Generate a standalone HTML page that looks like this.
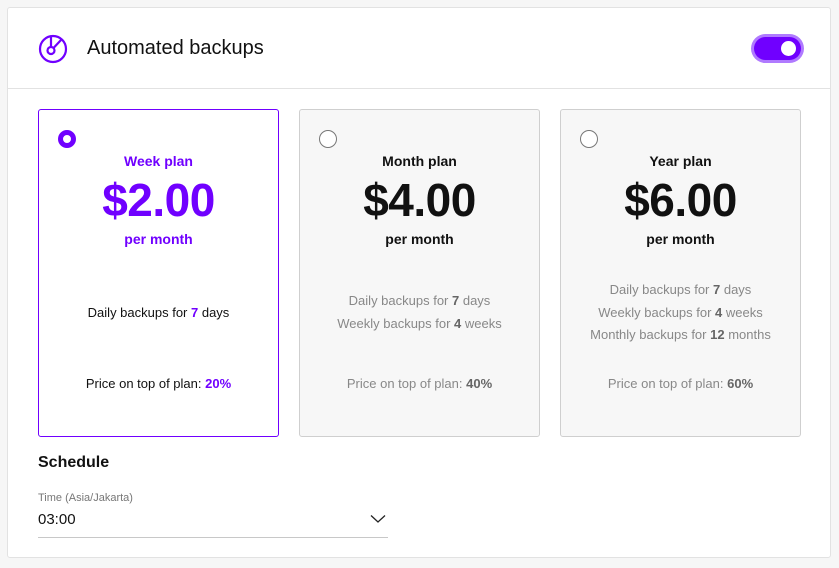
<!DOCTYPE html>
<html><head><style>
*{margin:0;padding:0;box-sizing:border-box}
body{width:839px;height:568px;background:#f6f6f6;font-family:"Liberation Sans",sans-serif;position:relative;overflow:hidden;color:#111}
.main{position:absolute;left:7px;top:7px;width:824px;height:551px;background:#fff;border:1px solid #e2e2e2;border-radius:3px}
.hdr{position:absolute;left:0;top:0;width:100%;height:81px;border-bottom:1px solid #e2e2e2}
.title{position:absolute;left:79px;top:29px;font-size:20px;color:#111}
.tog{position:absolute;left:746px;top:29px;width:47px;height:23px;border-radius:12px;background:#7000ff;box-shadow:0 0 0 3px #b07aff}
.tog i{position:absolute;right:5px;top:4px;width:15px;height:15px;border-radius:50%;background:#fff}
.card{position:absolute;top:109px;width:241px;height:328px;border:1px solid #cfcfcf;border-radius:3px;background:#f7f7f7;text-align:center;color:#888}
.card.sel{border-color:#7000ff;background:#fff;color:#111}
.rad{position:absolute;left:19px;top:20px;width:18px;height:18px;border-radius:50%;border:1.5px solid #777;background:#fff}
.sel .rad{border:5px solid #7000ff}
.pn{position:absolute;top:43px;width:100%;font-size:14px;font-weight:bold;color:#111}
.pr{position:absolute;top:63px;width:100%;font-size:46px;font-weight:bold;color:#111;letter-spacing:-0.5px}
.pm{position:absolute;top:121px;width:100%;font-size:14px;font-weight:bold;color:#111}
.sel .pn,.sel .pr,.sel .pm{color:#7000ff}
.ft{position:absolute;width:100%;font-size:13px;line-height:22.5px}
.ft b{color:#666}
</style></head><body>
<div class="main">
<div class="hdr">
<svg style="position:absolute;left:30px;top:26px" width="30" height="30" viewBox="0 0 30 30" fill="none" stroke="#7000ff" stroke-width="2.2"><circle cx="15" cy="15" r="13"/><circle cx="13" cy="16.5" r="3.5"/><path d="M13 13V2.5M15.5 14L23 6"/></svg>
<div class="title">Automated backups</div>
<div class="tog"><i></i></div>
</div>
</div>
<div class="card sel" style="left:38px"><div class="rad"></div><div class="pn">Week plan</div><div class="pr">$2.00</div><div class="pm">per month</div>
<div class="ft" style="top:192px">Daily backups for <b style="color:#7000ff">7</b> days</div>
<div class="ft" style="top:263px">Price on top of plan: <b style="color:#7000ff">20%</b></div></div>
<div class="card" style="left:299px"><div class="rad"></div><div class="pn">Month plan</div><div class="pr">$4.00</div><div class="pm">per month</div>
<div class="ft" style="top:180px">Daily backups for <b>7</b> days<br>Weekly backups for <b>4</b> weeks</div>
<div class="ft" style="top:263px">Price on top of plan: <b>40%</b></div></div>
<div class="card" style="left:560px"><div class="rad"></div><div class="pn">Year plan</div><div class="pr">$6.00</div><div class="pm">per month</div>
<div class="ft" style="top:169px">Daily backups for <b>7</b> days<br>Weekly backups for <b>4</b> weeks<br>Monthly backups for <b>12</b> months</div>
<div class="ft" style="top:263px">Price on top of plan: <b>60%</b></div></div>
<div style="position:absolute;left:38px;top:454px;font-size:16px;font-weight:bold">Schedule</div>
<div style="position:absolute;left:38px;top:492px;font-size:11px;color:#777">Time (Asia/Jakarta)</div>
<div style="position:absolute;left:38px;top:511px;font-size:15px;color:#111">03:00</div>
<svg style="position:absolute;left:370px;top:514px" width="16" height="10" viewBox="0 0 16 10" fill="none" stroke="#222" stroke-width="1.3"><path d="M1 1.5L8 8L15 1.5"/></svg>
<div style="position:absolute;left:38px;top:537px;width:350px;height:1px;background:#c8c8c8"></div>
</body></html>
